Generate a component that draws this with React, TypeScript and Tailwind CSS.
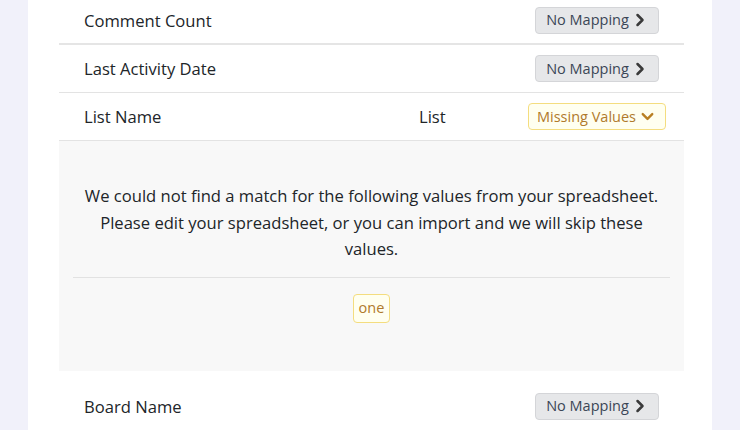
import { ChevronDown, ChevronRight } from 'lucide-react'

const font = { fontFamily: '"Open Sans", "Noto Sans", sans-serif' }

function NoMappingButton() {
  return (
    <button className="flex h-[27px] items-center rounded-[4px] border border-[#d4d5d8] bg-[#e6e7e9] pl-[10px] pr-[8px] text-[14.5px] text-[#3b4656]">
      No Mapping
      <ChevronRight size={20} strokeWidth={3} className="ml-[1px] text-[#3a3a3a]" />
    </button>
  )
}

function MissingButton() {
  return (
    <button className="flex h-[27px] items-center gap-[2px] rounded-[4px] border border-[#f4dd7f] bg-[#fffff0] pl-[8px] pr-[8px] text-[14.5px] text-[#b07a2c]">
      Missing Values
      <ChevronDown size={19} strokeWidth={3} className="text-[#b97f23]" />
    </button>
  )
}

function Row({ label, column, children, border = 'border-b border-[#e3e3e3]' }: { label: string; column?: string; children: React.ReactNode; border?: string }) {
  return (
    <div className={`grid h-[48px] grid-cols-[335px_1fr_174px] items-center pl-[25px] ${border}`}>
      <span className="pt-[2px] text-[16.6px] text-[#212529]">{label}</span>
      <span className="pt-[2px] text-[16.6px] text-[#212529]">{column}</span>
      <div className="flex justify-center">{children}</div>
    </div>
  )
}

export default function App() {
  return (
    <div className="flex h-[430px] w-[740px] overflow-hidden bg-[#f1f1fa]" style={font}>
      <div className="ml-[28px] w-[684px] bg-white pl-[31px] pr-[28px]">
        <div className="-mt-[3px]">
          <Row label="Comment Count" border="border-b-2 border-[#e5e5e5]">
            <NoMappingButton />
          </Row>
          <Row label="Last Activity Date">
            <NoMappingButton />
          </Row>
          <Row label="List Name" column="List">
            <MissingButton />
          </Row>
        </div>

        {/* Missing values panel */}
        <div className="h-[230px] bg-[#f8f8f8] px-[14px] pt-[42px]">
          <p className="mx-auto w-[582px] text-center text-[16.6px] leading-[26.5px] text-[#212529]">
            We could not find a match for the following values from your spreadsheet. Please edit your spreadsheet, or you can import and we will skip these values.
          </p>
          <div className="mt-[14px] border-t border-[#e2e2e2]" />
          <div className="mt-[16px] flex justify-center">
            <span className="flex h-[29px] items-center rounded-[4px] border border-[#f4dd7f] bg-[#fffff0] px-[5px] text-[14.5px] text-[#b07a2c]">
              one
            </span>
          </div>
        </div>

        <div className="mt-[11px]">
          <Row label="Board Name" border="">
            <NoMappingButton />
          </Row>
        </div>
      </div>
    </div>
  )
}
